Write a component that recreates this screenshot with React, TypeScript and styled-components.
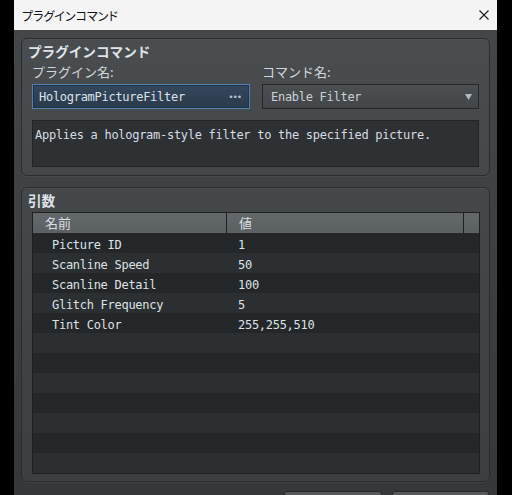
import React from "react";
import styled, { createGlobalStyle } from "styled-components";

const Global = createGlobalStyle`
  html, body { margin: 0; padding: 0; background: #000; overflow: hidden; }
  body { width: 512px; height: 495px; }
`;

const JP = `"Noto Sans CJK JP", "Noto Sans", sans-serif`;
const MONO = `"DejaVu Sans Mono", "Liberation Mono", monospace`;

const Window = styled.div`
  margin-left: 14px;
  width: 483px;
  height: 495px;
  overflow: hidden;
  display: flex;
  flex-direction: column;
  background: linear-gradient(#45484b, #35383b);
`;

const TitleBar = styled.div`
  flex: none;
  height: 30px;
  box-sizing: border-box;
  padding: 0 8px;
  display: flex;
  align-items: center;
  justify-content: space-between;
  background: #f4f4f4;
  color: #111;
  font-family: ${JP};
  font-size: 12px;
  font-feature-settings: "palt";
`;

const Body = styled.div`
  flex: 1;
  display: flex;
  flex-direction: column;
  padding: 8px 7px 0;
`;

const Group = styled.div<{ $gap?: number }>`
  margin-top: ${(p) => p.$gap ?? 0}px;
  border: 1px solid #2a2d2f;
  border-radius: 6px;
  background: rgba(255, 255, 255, 0.035);
  box-shadow: 0 1px 0 rgba(255, 255, 255, 0.05), inset 0 1px 0 rgba(255, 255, 255, 0.04);
  display: flex;
  flex-direction: column;
`;

const Legend = styled.div`
  padding: 4px 0 0 6px;
  font-family: ${JP};
  font-weight: 700;
  font-size: 13.6px;
  line-height: 17px;
  color: #dde3e8;
`;

const FieldGrid = styled.div`
  display: grid;
  grid-template-columns: 218px 217px;
  column-gap: 12px;
  margin: 4px 10px 0;
`;

const Field = styled.div`
  display: flex;
  flex-direction: column;
`;

const Label = styled.div`
  font-family: ${JP};
  font-size: 13px;
  line-height: 16px;
  color: #cfd6db;
  margin-bottom: 4px;
`;

const Mono = styled.span`
  font-family: ${MONO};
  font-size: 12px;
  letter-spacing: -0.28px;
  white-space: pre;
`;

const PluginInput = styled.div`
  height: 25px;
  box-sizing: border-box;
  border: 1px solid #5080b0;
  box-shadow: inset 0 0 0 1px #243243;
  background: linear-gradient(#34485c, #2a3a4c);
  display: flex;
  align-items: center;
  justify-content: space-between;
  padding: 0 7px 0 6px;
  color: #dbe3ea;
`;

const Dots = styled.span`
  font-family: ${MONO};
  font-size: 9px;
  letter-spacing: -1.2px;
  color: #b4c0cc;
  padding-right: 1px;
`;

const Combo = styled.div`
  height: 25px;
  box-sizing: border-box;
  border: 1px solid #25282a;
  background: linear-gradient(#4b4f52, #434649);
  display: flex;
  align-items: center;
  justify-content: space-between;
  padding: 0 6px 0 8px;
  color: #c9d1d7;
`;

const Description = styled.div`
  margin: 11px 10px 8px;
  height: 47px;
  box-sizing: border-box;
  border: 1px solid #222527;
  background: #2e3134;
  padding: 5px 2px;
  line-height: 16px;
  color: #d6dde2;
`;

const TableBox = styled.div`
  margin: 3px 9px 7px 10px;
  border: 1px solid #1d1f21;
  background: #25282b;
`;

const HeaderRow = styled.div`
  display: grid;
  grid-template-columns: 194px 237px 1fr;
  height: 20px;
  box-sizing: border-box;
  border-bottom: 1px solid #1d1f21;
`;

const HeaderCell = styled.div<{ $last?: boolean }>`
  background: linear-gradient(#63686b, #5b6063);
  border-right: ${(p) => (p.$last ? "none" : "1px solid #1d1f21")};
  padding-left: 12px;
  font-family: ${JP};
  font-size: 13px;
  line-height: 20px;
  color: #dadfe2;
`;

const Row = styled.div<{ $alt: boolean }>`
  display: grid;
  grid-template-columns: 194px 1fr;
  height: 20px;
  box-sizing: border-box;
  padding-top: 1px;
  line-height: 19px;
  background: ${(p) => (p.$alt ? "#2b2f32" : "#24272a")};
  color: #dde2e5;
`;

const NameCell = styled.div`
  padding-left: 19px;
`;

const ValueCell = styled.div`
  padding-left: 11px;
`;

const Footer = styled.div`
  display: flex;
  justify-content: flex-end;
  gap: 10px;
  padding: 9px 1px 0 0;
`;

const Button = styled.div<{ $w: number }>`
  width: ${(p) => p.$w}px;
  height: 24px;
  box-sizing: border-box;
  border: 1px solid #27292b;
  border-radius: 3px;
  background: linear-gradient(#575b5e, #4b4f52);
`;

const params: [string, string][] = [
  ["Picture ID", "1"],
  ["Scanline Speed", "50"],
  ["Scanline Detail", "100"],
  ["Glitch Frequency", "5"],
  ["Tint Color", "255,255,510"],
];

export default function App() {
  const rows = Array.from({ length: 12 }, (_, i) => params[i] ?? ["", ""]);
  return (
    <>
      <Global />
      <Window>
        <TitleBar>
          <span>プラグインコマンド</span>
          <svg width="10" height="10" viewBox="0 0 10 10">
            <path d="M0.5 0.5 L9.5 9.5 M9.5 0.5 L0.5 9.5" stroke="#1a1a1a" strokeWidth="1.1" fill="none" />
          </svg>
        </TitleBar>
        <Body>
          <Group>
            <Legend>プラグインコマンド</Legend>
            <FieldGrid>
              <Field>
                <Label>プラグイン名:</Label>
                <PluginInput>
                  <Mono>HologramPictureFilter</Mono>
                  <Dots>•••</Dots>
                </PluginInput>
              </Field>
              <Field>
                <Label>コマンド名:</Label>
                <Combo>
                  <Mono>Enable Filter</Mono>
                  <svg width="7" height="6" viewBox="0 0 7 6">
                    <polygon points="0,0 7,0 3.5,6" fill="#b0bac3" />
                  </svg>
                </Combo>
              </Field>
            </FieldGrid>
            <Description>
              <Mono>Applies a hologram-style filter to the specified picture.</Mono>
            </Description>
          </Group>
          <Group $gap={11}>
            <Legend>引数</Legend>
            <TableBox>
              <HeaderRow>
                <HeaderCell>名前</HeaderCell>
                <HeaderCell>値</HeaderCell>
                <HeaderCell $last />
              </HeaderRow>
              {rows.map(([n, v], i) => (
                <Row key={i} $alt={i % 2 === 1}>
                  <NameCell>
                    <Mono>{n}</Mono>
                  </NameCell>
                  <ValueCell>
                    <Mono>{v}</Mono>
                  </ValueCell>
                </Row>
              ))}
            </TableBox>
          </Group>
          <Footer>
            <Button $w={98} />
            <Button $w={97} />
          </Footer>
        </Body>
      </Window>
    </>
  );
}
